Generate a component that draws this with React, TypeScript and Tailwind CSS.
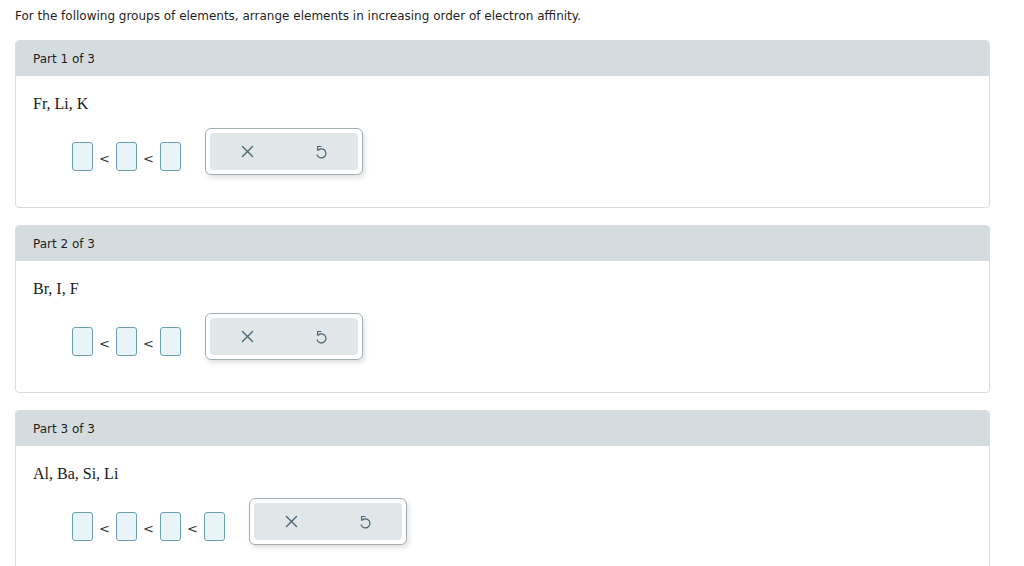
import React from 'react';

const parts = [
  { label: 'Part 1 of 3', elements: 'Fr, Li, K', slots: 3 },
  { label: 'Part 2 of 3', elements: 'Br, I, F', slots: 3 },
  { label: 'Part 3 of 3', elements: 'Al, Ba, Si, Li', slots: 4 },
];

const sans = { fontFamily: '"DejaVu Sans", Verdana, sans-serif' };

const CloseIcon = () => (
  <svg width="13" height="13" viewBox="0 0 13 13" fill="none" stroke="#4b6572" strokeWidth="1.4" strokeLinecap="round">
    <path d="M1.5 1.5 L11.5 11.5 M11.5 1.5 L1.5 11.5" />
  </svg>
);

const UndoIcon = () => (
  <svg width="12" height="14" viewBox="0 0 12 14" fill="none" stroke="#4b6572" strokeWidth="1.2" strokeLinecap="round" strokeLinejoin="round">
    <path d="M6 1.5 H2.6 V4.9" />
    <path d="M2.82 4.82 A4.5 4.5 0 1 1 1.77 9.54" transform="translate(0.4 0.4)" />
  </svg>
);

const Slot = () => (
  <div className="w-[21px] h-[29px] shrink-0 rounded-[3px] border-[1.5px] border-[#6a9fb0] bg-[#e9f4f9]" />
);

const Part = ({ label, elements, slots }: { label: string; elements: string; slots: number }) => (
  <div className="w-[975px] h-[168px] rounded-[4px] border border-[#d9dcde] overflow-hidden bg-white">
    <div className="h-[35px] bg-[#d5dcdf] flex items-center pl-[17px] text-[12px] text-[#1f1f1f]" style={sans}>
      {label}
    </div>
    <div className="pl-[17px] pt-[18px]">
      <div className="text-[16px] leading-[20px] text-[#1a1a1a]" style={{ fontFamily: '"Liberation Serif", "Times New Roman", serif' }}>
        {elements}
      </div>
      <div className="flex items-start mt-[14px] pl-[39px]">
        <div className="flex items-center mt-[14px]">
          {Array.from({ length: slots }).map((_, i) => (
            <React.Fragment key={i}>
              {i > 0 && (
                <span className="w-[23px] text-center text-[13px] text-[#333] leading-none pt-[3px]" style={sans}>
                  &lt;
                </span>
              )}
              <Slot />
            </React.Fragment>
          ))}
        </div>
        <div className="ml-[24px] w-[158px] h-[47px] rounded-[6px] border border-[#a3adb3] bg-white p-[4px] shadow-[2px_3px_5px_rgba(0,0,0,0.12)]">
          <div className="h-full rounded-[4px] bg-[#e1e6e9] flex">
            <div className="flex-1 flex items-center justify-center">
              <CloseIcon />
            </div>
            <div className="flex-1 flex items-center justify-center">
              <UndoIcon />
            </div>
          </div>
        </div>
      </div>
    </div>
  </div>
);

export default function App() {
  return (
    <div className="w-[1024px] h-[566px] overflow-hidden bg-white pl-[15px]">
      <p className="pt-[9px] text-[12px] leading-[14px] text-[#1f1f1f]" style={sans}>
        For the following groups of elements, arrange elements in increasing order of electron affinity.
      </p>
      <div className="mt-[17px] flex flex-col gap-[17px]">
        {parts.map((p) => (
          <Part key={p.label} {...p} />
        ))}
      </div>
    </div>
  );
}
